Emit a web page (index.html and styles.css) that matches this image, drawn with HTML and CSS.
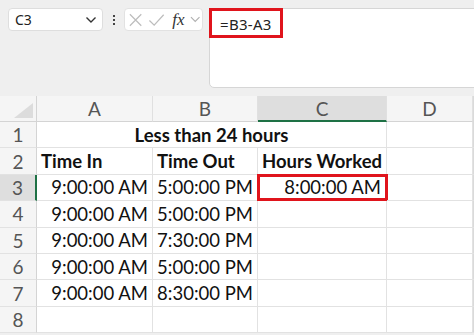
FILE: index.html
```html
<!DOCTYPE html>
<html lang="en">
<head>
  <meta charset="UTF-8" />
  <title>Less than 24 hours</title>
  <link rel="stylesheet" href="styles.css">
</head>
<body>

  <div class="toolbar">
    <div class="namebox">
      <span>C3</span>
      <svg width="12" height="8" viewBox="0 0 12 8"><path d="M1.5 1.5 L6 6 L10.5 1.5" fill="none" stroke="#333" stroke-width="1.4"/></svg>
    </div>
    <div class="dots"><i></i><i></i><i></i></div>
    <div class="fnbox">
      <svg width="16" height="16" viewBox="0 0 16 16"><path d="M2 2 L14 14 M14 2 L2 14" stroke="#bdbdbd" stroke-width="1.3"/></svg>
      <svg width="18" height="16" viewBox="0 0 18 16"><path d="M1.5 8.5 L6.5 13.5 L16.5 2.5" fill="none" stroke="#bdbdbd" stroke-width="1.3"/></svg>
      <span class="fx">fx</span>
      <svg width="11" height="7" viewBox="0 0 11 7"><path d="M1 1 L5.5 5.5 L10 1" fill="none" stroke="#b0b0b0" stroke-width="1.2"/></svg>
    </div>
    <div class="formula">
      <span class="formula-text">=B3-A3</span>
    </div>
  </div>

  <div class="sheet">
    <div class="hd corner">
      <svg width="19" height="15" viewBox="0 0 19 15"><path d="M19 0 L19 15 L0 15 Z" fill="#dcdcdc"/></svg>
    </div>
    <div class="hd col">A</div>
    <div class="hd col">B</div>
    <div class="hd col sel-col">C</div>
    <div class="hd col">D</div>
    <div class="hd col edge"></div>

    <div class="hd row">1</div>
    <div class="c span3 bold center">Less than 24 hours</div>
    <div class="c"></div>
    <div class="c edge"></div>

    <div class="hd row">2</div>
    <div class="c bold">Time In</div>
    <div class="c bold">Time Out</div>
    <div class="c bold">Hours Worked</div>
    <div class="c"></div>
    <div class="c edge"></div>

    <div class="hd row sel-row">3</div>
    <div class="c num">9:00:00 AM</div>
    <div class="c num">5:00:00 PM</div>
    <div class="c num active">8:00:00 AM</div>
    <div class="c"></div>
    <div class="c edge"></div>

    <div class="hd row">4</div>
    <div class="c num">9:00:00 AM</div>
    <div class="c num">5:00:00 PM</div>
    <div class="c"></div>
    <div class="c"></div>
    <div class="c edge"></div>

    <div class="hd row">5</div>
    <div class="c num">9:00:00 AM</div>
    <div class="c num">7:30:00 PM</div>
    <div class="c"></div>
    <div class="c"></div>
    <div class="c edge"></div>

    <div class="hd row">6</div>
    <div class="c num">9:00:00 AM</div>
    <div class="c num">5:00:00 PM</div>
    <div class="c"></div>
    <div class="c"></div>
    <div class="c edge"></div>

    <div class="hd row">7</div>
    <div class="c num">9:00:00 AM</div>
    <div class="c num">8:30:00 PM</div>
    <div class="c"></div>
    <div class="c"></div>
    <div class="c edge"></div>

    <div class="hd row">8</div>
    <div class="c"></div>
    <div class="c"></div>
    <div class="c"></div>
    <div class="c"></div>
    <div class="c edge"></div>
  </div>

</body>
</html>
```

FILE: styles.css
```css
body {
  margin: 0;
  background: #efefef;
  font-family: Lato, "Open Sans", sans-serif;
  overflow: hidden;
}
.toolbar {
  display: flex;
  align-items: flex-start;
  padding: 8px 0 0 8px;
  height: 80px;
}
.namebox {
  width: 95px;
  height: 23px;
  box-sizing: border-box;
  background: white;
  border: 1px solid #dedede;
  border-radius: 4px;
  display: flex;
  align-items: center;
  justify-content: space-between;
  padding: 0 5px 0 6px;
  font-family: "Noto Sans", sans-serif;
  font-size: 14px;
  color: #222;
}
.dots {
  width: 21px;
  height: 23px;
  display: flex;
  flex-direction: column;
  align-items: center;
  justify-content: center;
  gap: 2px;
}
.dots i {
  width: 2px;
  height: 2px;
  background: #444;
}
.fnbox {
  width: 79px;
  height: 23px;
  box-sizing: border-box;
  background: white;
  border: 1px solid #e2e2e2;
  border-radius: 4px;
  display: flex;
  align-items: center;
  padding: 0 2px 0 3px;
  gap: 5px;
}
.fx {
  font-family: "Liberation Serif", serif;
  font-style: italic;
  font-size: 17px;
  color: #333;
  margin-left: 2px;
}
.formula {
  flex: 1;
  height: 80px;
  margin-left: 6px;
  margin-right: -6px;
  box-sizing: border-box;
  background: white;
  border: 1px solid #d6d6d6;
  border-radius: 5px;
  position: relative;
}
.formula-text {
  position: absolute;
  left: -1px;
  top: -1px;
  width: 74px;
  height: 30px;
  box-sizing: border-box;
  border: 3px solid #e0141c;
  padding: 3px 0 0 8px;
  font-family: "Noto Sans", sans-serif;
  font-size: 15px;
  letter-spacing: 0.3px;
  color: #222;
}
.sheet {
  display: grid;
  grid-template-columns: 37px 116px 105px 129px 86px 1fr;
  grid-template-rows: 26px repeat(8, 26.4px);
  margin-top: 8px;
  background: white;
}
.hd {
  background: #f5f5f5;
  color: #555;
  font-size: 19px;
  display: flex;
  align-items: center;
  justify-content: center;
  box-sizing: border-box;
}
.col {
  border-right: 1px solid #e0e0e0;
  border-bottom: 1px solid #d4d4d4;
}
.row {
  border-bottom: 1px solid #e2e2e2;
  border-right: 1px solid #d4d4d4;
}
.corner {
  border-right: 1px solid #d4d4d4;
  border-bottom: 1px solid #d4d4d4;
  justify-content: flex-end;
  align-items: flex-end;
  padding: 0 3px 3px 0;
}
.sel-col {
  background: #dedede;
  border-bottom: 2px solid #1e7145;
}
.sel-row {
  background: #dedede;
  border-right: 2px solid #1e7145;
}
.edge {
  background: #dadada;
  border: none;
}
.c {
  border-right: 1px solid #e2e2e2;
  border-bottom: 1px solid #e2e2e2;
  box-sizing: border-box;
  font-size: 18.5px;
  color: #111;
  display: flex;
  align-items: center;
  padding: 0 4px;
  white-space: nowrap;
}
.span3 {
  grid-column: span 3;
}
.bold {
  font-weight: bold;
}
.center {
  justify-content: center;
}
.num {
  justify-content: flex-end;
}
.active {
  border: 3px solid #e0141c;
  margin: -1px -1px 0 -1px;
}
```
